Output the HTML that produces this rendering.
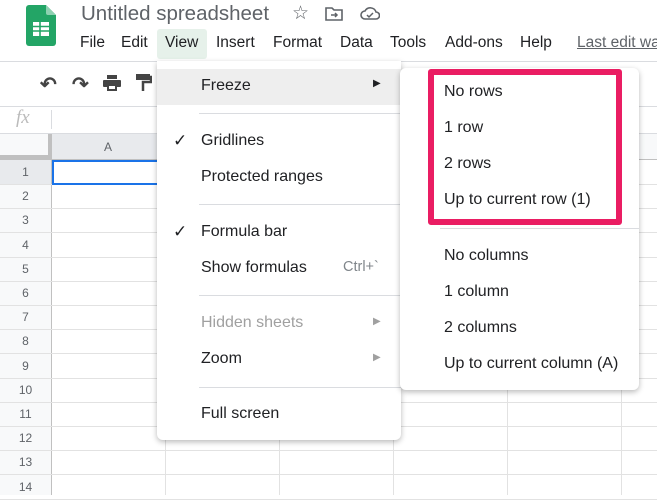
<!DOCTYPE html>
<html><head><style>
*{margin:0;padding:0;box-sizing:border-box}
body{width:657px;height:495px;overflow:hidden;background:#fff;font-family:"Liberation Sans",Arial,sans-serif;position:relative;color:#202124}
.a{position:absolute}
.menu div.t{position:absolute;font-size:16px;color:#202124;white-space:nowrap}
.hl{position:absolute;height:1px;background:#dadce0}
.rn{position:absolute;left:0;width:51px;text-align:center;font-size:12px;color:#5f6368}
</style></head><body>
<svg class="a" style="left:26px;top:5px" width="30" height="41" viewBox="0 0 30 41"><path d="M3 0h17l10 10v28a3 3 0 0 1-3 3H3a3 3 0 0 1-3-3V3a3 3 0 0 1 3-3z" fill="#23a566"/><path d="M20 0l10 10h-8a2 2 0 0 1-2-2z" fill="#8ed1b1"/><rect x="7" y="17" width="16" height="14" fill="#fff"/><path d="M7 21.5h16M7 26h16M14 17v14" stroke="#23a566" stroke-width="1.6"/></svg>
<div class="a" style="left:81px;top:2px;font-size:20.5px;color:#5f6368">Untitled spreadsheet</div>
<div class="a" style="left:292px;top:2px;font-size:19px;color:#5f6368">☆</div>
<svg class="a" style="left:325px;top:7px" width="18" height="14" viewBox="0 0 18 14"><path d="M1 1h6l2 2h8v10H1z" fill="none" stroke="#5f6368" stroke-width="1.6"/><path d="M6 8h6M10 6l2 2-2 2" fill="none" stroke="#5f6368" stroke-width="1.5"/></svg>
<svg class="a" style="left:360px;top:6px" width="20" height="14" viewBox="0 0 20 14"><path d="M5 13a4 4 0 0 1 0-8 6 6 0 0 1 11 1 3.5 3.5 0 0 1 0 7z" fill="none" stroke="#5f6368" stroke-width="1.6"/><path d="M7 9l2 2 4-4" fill="none" stroke="#5f6368" stroke-width="1.5"/></svg>
<div class="a" style="left:157px;top:29px;width:50px;height:30px;background:#e6f1ea;border-radius:3px"></div>
<div class="a" style="top:34px;left:0;font-size:15.5px;color:#202124;white-space:nowrap">
<span class="a" style="left:80px">File</span><span class="a" style="left:121px">Edit</span><span class="a" style="left:165px">View</span><span class="a" style="left:216px">Insert</span><span class="a" style="left:273px">Format</span><span class="a" style="left:340px">Data</span><span class="a" style="left:390px">Tools</span><span class="a" style="left:445px">Add-ons</span><span class="a" style="left:520px">Help</span><span class="a" style="left:577px;color:#5f6368;text-decoration:underline">Last edit was</span></div>
<div class="hl" style="left:0;top:61px;width:657px"></div>
<div class="a" style="left:40px;top:72px;font-size:20px;color:#444;font-weight:bold">↶</div>
<div class="a" style="left:72px;top:72px;font-size:20px;color:#444;font-weight:bold">↷</div>
<svg class="a" style="left:103px;top:75px" width="18" height="16" viewBox="0 0 18 16"><rect x="4" y="0" width="10" height="4" fill="#444"/><rect x="0" y="5" width="18" height="7" rx="1" fill="#444"/><rect x="4" y="10" width="10" height="6" fill="#444"/><rect x="6" y="11" width="6" height="3" fill="#fff"/></svg>
<svg class="a" style="left:136px;top:74px" width="16" height="18" viewBox="0 0 16 18"><rect x="0" y="0" width="14" height="6" fill="#444"/><path d="M14 3h1v5H7v9" fill="none" stroke="#444" stroke-width="2.5"/></svg>
<div class="hl" style="left:0;top:106px;width:657px"></div>
<div class="a" style="left:16px;top:107px;font-size:19px;font-style:italic;color:#bbb;font-family:'Liberation Serif',serif">fx</div>
<div class="a" style="left:51px;top:110px;width:1px;height:19px;background:#dadce0"></div>
<div class="hl" style="left:0;top:133px;width:657px"></div>
<div class="a" style="left:0;top:134px;width:657px;height:25px;background:#f8f9fa"></div>
<div class="a" style="left:0;top:134px;width:51px;height:361px;background:#f8f9fa"></div>
<div class="a" style="left:0;top:134px;width:52px;height:25px;background:#f8f9fa;border-right:4px solid #c0c0c0;border-bottom:4px solid #c0c0c0"></div>
<div class="a" style="left:52px;top:134px;width:113px;height:25px;background:#e8eaed"></div>
<div class="a" style="left:104px;top:140px;font-size:12px;color:#5f6368">A</div>
<div class="a" style="left:0;top:159px;width:657px;height:1px;background:#c0c0c0"></div>
<div class="a" style="left:0;top:160px;width:51px;height:24px;background:#e8eaed"></div>
<div class="a" style="left:51px;top:134px;width:1px;height:361px;background:#c0c0c0"></div>
<div class="a" style="left:165px;top:134px;width:1px;height:361px;background:#e2e2e2"></div>
<div class="a" style="left:279px;top:134px;width:1px;height:361px;background:#e2e2e2"></div>
<div class="a" style="left:393px;top:134px;width:1px;height:361px;background:#e2e2e2"></div>
<div class="a" style="left:507px;top:134px;width:1px;height:361px;background:#e2e2e2"></div>
<div class="a" style="left:621px;top:134px;width:1px;height:361px;background:#e2e2e2"></div>
<div id="rows"></div>
<div class="a" style="left:52px;top:160px;width:114px;height:25px;border:2px solid #1a73e8"></div>
<script>
var h='';for(var i=1;i<=14;i++){var t=160+(i-1)*24.2;h+='<div class="a" style="left:0;top:'+(t+24)+'px;width:657px;height:1px;background:#e2e2e2"></div><div class="rn" style="top:'+(t+5)+'px">'+i+'</div>';}
document.getElementById('rows').innerHTML=h;
</script>
<div class="a menu" style="left:157px;top:61px;width:244px;height:379px;background:#fff;border-radius:0 0 6px 6px;box-shadow:0 2px 6px rgba(0,0,0,.28)">
<div class="a" style="left:0;top:8px;width:244px;height:36px;background:#eeeeee"></div>
<div class="t" style="left:44px;top:16px">Freeze</div><div class="t" style="left:216px;top:17px;font-size:10px">▶</div>
<div class="hl" style="left:42px;top:52px;width:202px"></div>
<div class="t" style="left:16px;top:70px;font-size:17px">✓</div><div class="t" style="left:44px;top:71px">Gridlines</div>
<div class="t" style="left:44px;top:107px">Protected ranges</div>
<div class="hl" style="left:42px;top:143px;width:202px"></div>
<div class="t" style="left:16px;top:161px;font-size:17px">✓</div><div class="t" style="left:44px;top:162px">Formula bar</div>
<div class="t" style="left:44px;top:198px">Show formulas</div><div class="t" style="left:186px;top:198px;color:#80868b;font-size:14.5px">Ctrl+`</div>
<div class="hl" style="left:42px;top:234px;width:202px"></div>
<div class="t" style="left:44px;top:253px;color:#a0a0a0">Hidden sheets</div><div class="t" style="left:216px;top:255px;font-size:10px;color:#a0a0a0">▶</div>
<div class="t" style="left:44px;top:289px">Zoom</div><div class="t" style="left:216px;top:291px;font-size:10px;color:#a0a0a0">▶</div>
<div class="hl" style="left:42px;top:326px;width:202px"></div>
<div class="t" style="left:44px;top:344px">Full screen</div>
</div>
<div class="a menu" style="left:400px;top:68px;width:239px;height:322px;background:#fff;border-radius:6px;box-shadow:0 2px 6px rgba(0,0,0,.28)">
<div class="t" style="left:44px;top:15px">No rows</div>
<div class="t" style="left:44px;top:51px">1 row</div>
<div class="t" style="left:44px;top:87px">2 rows</div>
<div class="t" style="left:44px;top:123px">Up to current row (1)</div>
<div class="hl" style="left:40px;top:160px;width:199px"></div>
<div class="t" style="left:44px;top:179px">No columns</div>
<div class="t" style="left:44px;top:215px">1 column</div>
<div class="t" style="left:44px;top:251px">2 columns</div>
<div class="t" style="left:44px;top:287px">Up to current column (A)</div>
</div>
<div class="a" style="left:428px;top:69px;width:194px;height:156px;border:6px solid #ea1d63;border-radius:3px"></div>
</body></html>
